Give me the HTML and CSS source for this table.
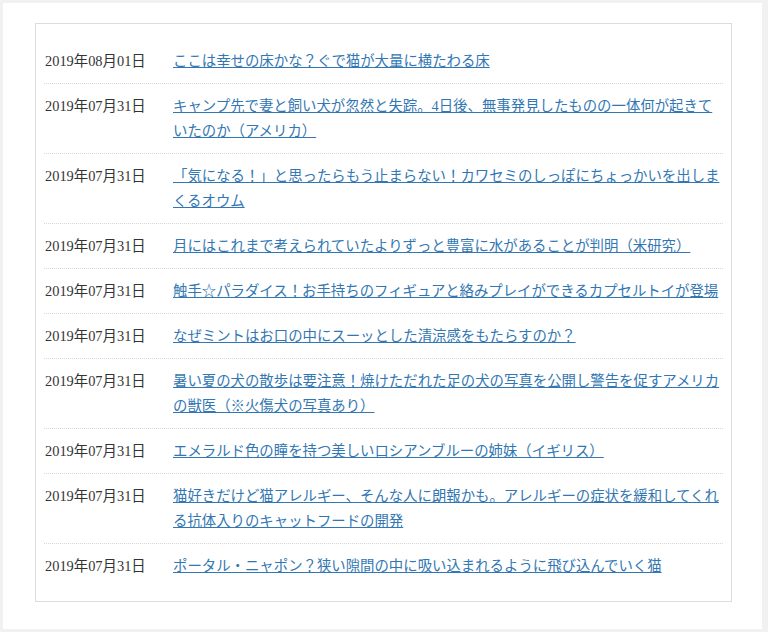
FILE: index.html
```html
<!DOCTYPE html>
<html lang="ja">
<head>
<meta charset="utf-8">
<title>News list</title>
<link rel="stylesheet" href="styles.css">
</head>
<body>
<div class="panel">
  <div class="box">
    <ul class="news">
      <li class="row"><span class="date">2019年08月01日</span><a class="title" href="#">ここは幸せの床かな？ぐで猫が大量に横たわる床</a></li>
      <li class="row"><span class="date">2019年07月31日</span><a class="title" href="#">キャンプ先で妻と飼い犬が忽然と失踪。4日後、無事発見したものの一体何が起きていたのか（アメリカ）</a></li>
      <li class="row"><span class="date">2019年07月31日</span><a class="title" href="#">「気になる！」と思ったらもう止まらない！カワセミのしっぽにちょっかいを出しまくるオウム</a></li>
      <li class="row"><span class="date">2019年07月31日</span><a class="title" href="#">月にはこれまで考えられていたよりずっと豊富に水があることが判明（米研究）</a></li>
      <li class="row"><span class="date">2019年07月31日</span><a class="title" href="#">触手☆パラダイス！お手持ちのフィギュアと絡みプレイができるカプセルトイが登場</a></li>
      <li class="row"><span class="date">2019年07月31日</span><a class="title" href="#">なぜミントはお口の中にスーッとした清涼感をもたらすのか？</a></li>
      <li class="row"><span class="date">2019年07月31日</span><a class="title" href="#">暑い夏の犬の散歩は要注意！焼けただれた足の犬の写真を公開し警告を促すアメリカの獣医（※火傷犬の写真あり）</a></li>
      <li class="row"><span class="date">2019年07月31日</span><a class="title" href="#">エメラルド色の瞳を持つ美しいロシアンブルーの姉妹（イギリス）</a></li>
      <li class="row"><span class="date">2019年07月31日</span><a class="title" href="#">猫好きだけど猫アレルギー、そんな人に朗報かも。アレルギーの症状を緩和してくれる抗体入りのキャットフードの開発</a></li>
      <li class="row"><span class="date">2019年07月31日</span><a class="title" href="#">ポータル・ニャポン？狭い隙間の中に吸い込まれるように飛び込んでいく猫</a></li>
    </ul>
  </div>
</div>
</body>
</html>
```
FILE: styles.css
```css
html, body {
  margin: 0;
  padding: 0;
}
body {
  background: #f1f1f1;
  width: 768px;
  height: 632px;
  overflow: hidden;
  font-family: "Liberation Serif", "Noto Sans CJK JP", serif;
  font-size: 14.4px;
  color: #333;
}
.panel {
  background: #fff;
  margin: 3px 6px 0 3px;
  height: 626px;
  padding: 20px 30px 0 32px;
  box-sizing: border-box;
}
.box {
  border: 1px solid #dcdcdc;
  padding: 15px 8px 13px 8px;
}
.news {
  list-style: none;
  margin: 0;
  padding: 0;
}
.row {
  display: grid;
  grid-template-columns: 129px 1fr;
  padding: 9.5px 0;
  line-height: 25px;
  border-bottom: 1px dotted #d6d6d6;
}
.row:last-child {
  border-bottom: none;
}
.date {
  padding-left: 1px;
  color: #333;
  white-space: nowrap;
}
.title {
  color: #3277b3;
  text-decoration: underline;
}
```
